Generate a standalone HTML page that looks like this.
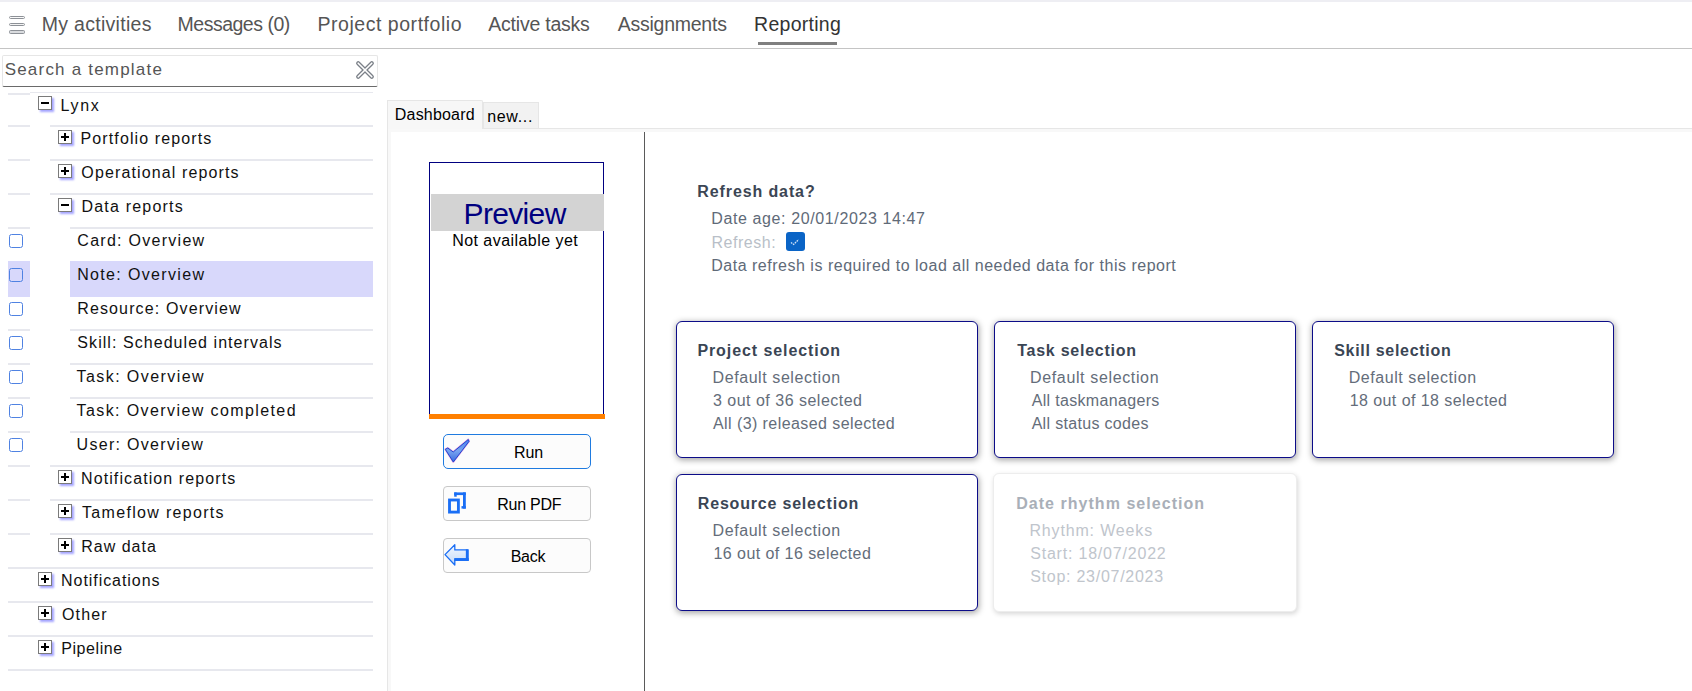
<!DOCTYPE html>
<html><head><meta charset="utf-8"><style>
html,body{margin:0;padding:0;background:#fff;}
body{width:1692px;height:691px;position:relative;overflow:hidden;font-family:"Liberation Sans",sans-serif;}
.t{position:absolute;white-space:pre;}
.r{position:absolute;}
</style></head><body>
<div class="r" style="left:0px;top:0px;width:1692px;height:2px;background:#eeeef3"></div>
<div class="r" style="left:9px;top:15.9px;width:16px;height:3.1px;border:1.3px solid #8d9197;border-radius:1.5px;background:#fafafa;box-sizing:border-box"></div>
<div class="r" style="left:9px;top:23px;width:16px;height:3.2px;border:1.3px solid #8d9197;border-radius:1.5px;background:#f2f2f2;box-sizing:border-box"></div>
<div class="r" style="left:9px;top:30.2px;width:16px;height:3.5px;border:1.3px solid #8d9197;border-radius:1.5px;background:#d9dbde;box-sizing:border-box"></div>
<div class="t" style="left:41.72px;top:12.94px;font-size:19.5px;line-height:23px;color:#555;font-weight:400;letter-spacing:0.294px;">My activities</div>
<div class="t" style="left:177.56px;top:12.94px;font-size:19.5px;line-height:23px;color:#555;font-weight:400;letter-spacing:-0.493px;">Messages (0)</div>
<div class="t" style="left:317.52px;top:12.94px;font-size:19.5px;line-height:23px;color:#555;font-weight:400;letter-spacing:0.530px;">Project portfolio</div>
<div class="t" style="left:488.32px;top:12.94px;font-size:19.5px;line-height:23px;color:#555;font-weight:400;letter-spacing:-0.234px;">Active tasks</div>
<div class="t" style="left:617.68px;top:12.94px;font-size:19.5px;line-height:23px;color:#555;font-weight:400;letter-spacing:-0.240px;">Assignments</div>
<div class="t" style="left:754.04px;top:12.94px;font-size:19.5px;line-height:23px;color:#333;font-weight:400;letter-spacing:0.280px;">Reporting</div>
<div class="r" style="left:758px;top:42px;width:79px;height:3px;background:#7f7f7f"></div>
<div class="r" style="left:0px;top:48px;width:1692px;height:1px;background:#c4c4c4"></div>
<div class="r" style="left:2px;top:55px;width:376px;height:32px;border:1px solid #e6e6e6;border-bottom:1.5px solid #6a6a6a;border-radius:2px;box-sizing:border-box;background:#fff"></div>
<div class="t" style="left:4.68px;top:60.11px;font-size:17px;line-height:20px;color:#555;font-weight:400;letter-spacing:1.200px;">Search a template</div>
<svg class="r" style="left:355px;top:60px" width="20" height="20" viewBox="0 0 20 20"><path d="M3.2 3.2 L16.8 16.8 M16.8 3.2 L3.2 16.8" fill="none" stroke="#7b8088" stroke-width="4.2" stroke-linecap="round"/><path d="M3.2 3.2 L16.8 16.8 M16.8 3.2 L3.2 16.8" fill="none" stroke="#fff" stroke-width="1.6" stroke-linecap="round"/></svg>
<div class="r" style="left:8px;top:93px;width:22px;height:2px;background:#e7e8ee"></div>
<div class="r" style="left:30px;top:92px;width:343px;height:1px;background:#e7e8ee"></div>
<div class="r" style="left:38px;top:96px;width:14px;height:14px;background:#fff;border:1.5px solid #7a7a7a;box-sizing:border-box;box-shadow:2px 2px 2px #a4a4ff"></div>
<div class="r" style="left:41px;top:102px;width:8px;height:2px;background:#000"></div>
<div class="t" style="left:60.56px;top:96.06px;font-size:16px;line-height:19px;color:#111;font-weight:400;letter-spacing:1.692px;">Lynx</div>
<div class="r" style="left:8px;top:125px;width:22px;height:2px;background:#e7e8ee"></div>
<div class="r" style="left:50px;top:125px;width:323px;height:2px;background:#e7e8ee"></div>
<div class="r" style="left:58px;top:130px;width:14px;height:14px;background:#fff;border:1.5px solid #7a7a7a;box-sizing:border-box;box-shadow:2px 2px 2px #a4a4ff"></div>
<div class="r" style="left:61px;top:136px;width:8px;height:2px;background:#000"></div>
<div class="r" style="left:64px;top:133px;width:2px;height:8px;background:#000"></div>
<div class="t" style="left:80.56px;top:129.06px;font-size:16px;line-height:19px;color:#111;font-weight:400;letter-spacing:1.110px;">Portfolio reports</div>
<div class="r" style="left:8px;top:159px;width:22px;height:2px;background:#e7e8ee"></div>
<div class="r" style="left:50px;top:159px;width:323px;height:2px;background:#e7e8ee"></div>
<div class="r" style="left:58px;top:164px;width:14px;height:14px;background:#fff;border:1.5px solid #7a7a7a;box-sizing:border-box;box-shadow:2px 2px 2px #a4a4ff"></div>
<div class="r" style="left:61px;top:170px;width:8px;height:2px;background:#000"></div>
<div class="r" style="left:64px;top:167px;width:2px;height:8px;background:#000"></div>
<div class="t" style="left:81.36px;top:163.06px;font-size:16px;line-height:19px;color:#111;font-weight:400;letter-spacing:1.125px;">Operational reports</div>
<div class="r" style="left:8px;top:193px;width:22px;height:2px;background:#e7e8ee"></div>
<div class="r" style="left:50px;top:193px;width:323px;height:2px;background:#e7e8ee"></div>
<div class="r" style="left:58px;top:198px;width:14px;height:14px;background:#fff;border:1.5px solid #7a7a7a;box-sizing:border-box;box-shadow:2px 2px 2px #a4a4ff"></div>
<div class="r" style="left:61px;top:204px;width:8px;height:2px;background:#000"></div>
<div class="t" style="left:81.52px;top:197.06px;font-size:16px;line-height:19px;color:#111;font-weight:400;letter-spacing:1.192px;">Data reports</div>
<div class="r" style="left:8px;top:227px;width:22px;height:2px;background:#e7e8ee"></div>
<div class="r" style="left:70px;top:227px;width:303px;height:2px;background:#e7e8ee"></div>
<div class="r" style="left:9px;top:234px;width:14px;height:14px;border:1.6px solid #4f82e2;border-radius:2.5px;box-sizing:border-box"></div>
<div class="t" style="left:77.36px;top:231.06px;font-size:16px;line-height:19px;color:#111;font-weight:400;letter-spacing:1.271px;">Card: Overview</div>
<div class="r" style="left:8px;top:261px;width:22px;height:2px;background:#e7e8ee"></div>
<div class="r" style="left:70px;top:261px;width:303px;height:2px;background:#e7e8ee"></div>
<div class="r" style="left:8px;top:261px;width:22px;height:36px;background:#d8d8fb"></div>
<div class="r" style="left:70px;top:261px;width:303px;height:36px;background:#d8d8fb"></div>
<div class="r" style="left:9px;top:268px;width:14px;height:14px;border:1.6px solid #4f82e2;border-radius:2.5px;box-sizing:border-box"></div>
<div class="t" style="left:77.20px;top:265.06px;font-size:16px;line-height:19px;color:#111;font-weight:400;letter-spacing:1.346px;">Note: Overview</div>
<div class="r" style="left:9px;top:302px;width:14px;height:14px;border:1.6px solid #4f82e2;border-radius:2.5px;box-sizing:border-box"></div>
<div class="t" style="left:77.20px;top:299.06px;font-size:16px;line-height:19px;color:#111;font-weight:400;letter-spacing:1.140px;">Resource: Overview</div>
<div class="r" style="left:8px;top:329px;width:22px;height:2px;background:#e7e8ee"></div>
<div class="r" style="left:70px;top:329px;width:303px;height:2px;background:#e7e8ee"></div>
<div class="r" style="left:9px;top:336px;width:14px;height:14px;border:1.6px solid #4f82e2;border-radius:2.5px;box-sizing:border-box"></div>
<div class="t" style="left:77.36px;top:333.06px;font-size:16px;line-height:19px;color:#111;font-weight:400;letter-spacing:1.052px;">Skill: Scheduled intervals</div>
<div class="r" style="left:8px;top:363px;width:22px;height:2px;background:#e7e8ee"></div>
<div class="r" style="left:70px;top:363px;width:303px;height:2px;background:#e7e8ee"></div>
<div class="r" style="left:9px;top:370px;width:14px;height:14px;border:1.6px solid #4f82e2;border-radius:2.5px;box-sizing:border-box"></div>
<div class="t" style="left:76.56px;top:367.06px;font-size:16px;line-height:19px;color:#111;font-weight:400;letter-spacing:1.422px;">Task: Overview</div>
<div class="r" style="left:8px;top:397px;width:22px;height:2px;background:#e7e8ee"></div>
<div class="r" style="left:70px;top:397px;width:303px;height:2px;background:#e7e8ee"></div>
<div class="r" style="left:9px;top:404px;width:14px;height:14px;border:1.6px solid #4f82e2;border-radius:2.5px;box-sizing:border-box"></div>
<div class="t" style="left:76.56px;top:401.06px;font-size:16px;line-height:19px;color:#111;font-weight:400;letter-spacing:1.403px;">Task: Overview completed</div>
<div class="r" style="left:8px;top:431px;width:22px;height:2px;background:#e7e8ee"></div>
<div class="r" style="left:70px;top:431px;width:303px;height:2px;background:#e7e8ee"></div>
<div class="r" style="left:9px;top:438px;width:14px;height:14px;border:1.6px solid #4f82e2;border-radius:2.5px;box-sizing:border-box"></div>
<div class="t" style="left:76.56px;top:435.06px;font-size:16px;line-height:19px;color:#111;font-weight:400;letter-spacing:1.307px;">User: Overview</div>
<div class="r" style="left:8px;top:465px;width:22px;height:2px;background:#e7e8ee"></div>
<div class="r" style="left:50px;top:465px;width:323px;height:2px;background:#e7e8ee"></div>
<div class="r" style="left:58px;top:470px;width:14px;height:14px;background:#fff;border:1.5px solid #7a7a7a;box-sizing:border-box;box-shadow:2px 2px 2px #a4a4ff"></div>
<div class="r" style="left:61px;top:476px;width:8px;height:2px;background:#000"></div>
<div class="r" style="left:64px;top:473px;width:2px;height:8px;background:#000"></div>
<div class="t" style="left:81.04px;top:469.06px;font-size:16px;line-height:19px;color:#111;font-weight:400;letter-spacing:1.094px;">Notification reports</div>
<div class="r" style="left:8px;top:499px;width:22px;height:2px;background:#e7e8ee"></div>
<div class="r" style="left:50px;top:499px;width:323px;height:2px;background:#e7e8ee"></div>
<div class="r" style="left:58px;top:504px;width:14px;height:14px;background:#fff;border:1.5px solid #7a7a7a;box-sizing:border-box;box-shadow:2px 2px 2px #a4a4ff"></div>
<div class="r" style="left:61px;top:510px;width:8px;height:2px;background:#000"></div>
<div class="r" style="left:64px;top:507px;width:2px;height:8px;background:#000"></div>
<div class="t" style="left:82.00px;top:503.06px;font-size:16px;line-height:19px;color:#111;font-weight:400;letter-spacing:1.320px;">Tameflow reports</div>
<div class="r" style="left:8px;top:533px;width:22px;height:2px;background:#e7e8ee"></div>
<div class="r" style="left:50px;top:533px;width:323px;height:2px;background:#e7e8ee"></div>
<div class="r" style="left:58px;top:538px;width:14px;height:14px;background:#fff;border:1.5px solid #7a7a7a;box-sizing:border-box;box-shadow:2px 2px 2px #a4a4ff"></div>
<div class="r" style="left:61px;top:544px;width:8px;height:2px;background:#000"></div>
<div class="r" style="left:64px;top:541px;width:2px;height:8px;background:#000"></div>
<div class="t" style="left:81.20px;top:537.06px;font-size:16px;line-height:19px;color:#111;font-weight:400;letter-spacing:1.000px;">Raw data</div>
<div class="r" style="left:8px;top:567px;width:22px;height:2px;background:#e7e8ee"></div>
<div class="r" style="left:30px;top:567px;width:343px;height:2px;background:#e7e8ee"></div>
<div class="r" style="left:38px;top:572px;width:14px;height:14px;background:#fff;border:1.5px solid #7a7a7a;box-sizing:border-box;box-shadow:2px 2px 2px #a4a4ff"></div>
<div class="r" style="left:41px;top:578px;width:8px;height:2px;background:#000"></div>
<div class="r" style="left:44px;top:575px;width:2px;height:8px;background:#000"></div>
<div class="t" style="left:61.04px;top:571.06px;font-size:16px;line-height:19px;color:#111;font-weight:400;letter-spacing:0.947px;">Notifications</div>
<div class="r" style="left:8px;top:601px;width:22px;height:2px;background:#e7e8ee"></div>
<div class="r" style="left:30px;top:601px;width:343px;height:2px;background:#e7e8ee"></div>
<div class="r" style="left:38px;top:606px;width:14px;height:14px;background:#fff;border:1.5px solid #7a7a7a;box-sizing:border-box;box-shadow:2px 2px 2px #a4a4ff"></div>
<div class="r" style="left:41px;top:612px;width:8px;height:2px;background:#000"></div>
<div class="r" style="left:44px;top:609px;width:2px;height:8px;background:#000"></div>
<div class="t" style="left:62.00px;top:605.06px;font-size:16px;line-height:19px;color:#111;font-weight:400;letter-spacing:1.120px;">Other</div>
<div class="r" style="left:8px;top:635px;width:22px;height:2px;background:#e7e8ee"></div>
<div class="r" style="left:30px;top:635px;width:343px;height:2px;background:#e7e8ee"></div>
<div class="r" style="left:38px;top:640px;width:14px;height:14px;background:#fff;border:1.5px solid #7a7a7a;box-sizing:border-box;box-shadow:2px 2px 2px #a4a4ff"></div>
<div class="r" style="left:41px;top:646px;width:8px;height:2px;background:#000"></div>
<div class="r" style="left:44px;top:643px;width:2px;height:8px;background:#000"></div>
<div class="t" style="left:61.20px;top:639.06px;font-size:16px;line-height:19px;color:#111;font-weight:400;letter-spacing:0.587px;">Pipeline</div>
<div class="r" style="left:8px;top:669px;width:365px;height:2px;background:#e7e8ee"></div>
<div class="r" style="left:387px;top:100px;width:1px;height:591px;background:#e6e6e6"></div>
<div class="r" style="left:388px;top:100px;width:95px;height:32px;background:#f7f7f7;border:1px solid #e6e6e6;border-bottom:none;border-left:none;border-top-right-radius:2px;box-sizing:border-box"></div>
<div class="t" style="left:394.84px;top:104.96px;font-size:16px;line-height:19px;color:#000;font-weight:400;letter-spacing:0.180px;">Dashboard</div>
<div class="r" style="left:483px;top:102px;width:56px;height:27px;background:#f2f2f2;border:1px solid #e6e6e6;box-sizing:border-box"></div>
<div class="t" style="left:487.16px;top:106.66px;font-size:16px;line-height:19px;color:#000;font-weight:400;letter-spacing:0.688px;">new...</div>
<div class="r" style="left:483px;top:128px;width:1209px;height:1px;background:#e6e6e6"></div>
<div class="r" style="left:388px;top:129px;width:1304px;height:3px;background:#f8f8f8"></div>
<div class="r" style="left:388px;top:132px;width:3px;height:559px;background:#f8f8f8"></div>
<div class="r" style="left:644px;top:132px;width:1px;height:559px;background:#5a5a5a"></div>
<div class="r" style="left:429px;top:162px;width:175px;height:254px;border:1px solid #000080;box-sizing:border-box;background:#fff"></div>
<div class="r" style="left:431px;top:194px;width:173px;height:37px;background:#d3d3d3"></div>
<div class="t" style="left:463.60px;top:196.10px;font-size:30px;line-height:36px;color:#000080;font-weight:400;letter-spacing:-0.667px;">Preview</div>
<div class="t" style="left:452.20px;top:230.96px;font-size:16px;line-height:19px;color:#000;font-weight:400;letter-spacing:0.450px;">Not available yet</div>
<div class="r" style="left:429px;top:414px;width:176px;height:5px;background:#ff8000"></div>
<div class="r" style="left:443px;top:434px;width:148px;height:35px;border:1.5px solid #1f7be0;border-radius:5px;box-sizing:border-box;background:#fcfcfc"></div>
<svg class="r" style="left:444px;top:438px" width="26" height="26" viewBox="0 0 26 26"><defs><linearGradient id="ck" x1="0" y1="0" x2="0" y2="1"><stop offset="0" stop-color="#4a80f0"/><stop offset="0.5" stop-color="#78a4f0"/><stop offset="1" stop-color="#3a6ae0"/></linearGradient></defs><path d="M1.3 11.3 L3.8 10 L9.2 14 L24.3 1.5 L25 3.4 L9.3 24 Z" fill="none" stroke="#e0a0e0" stroke-width="1.8" stroke-linejoin="round"/><path d="M1.3 11.3 L3.8 10 L9.2 14 L24.3 1.5 L25 3.4 L9.3 24 Z" fill="url(#ck)" stroke="#2448d0" stroke-width="1" stroke-linejoin="round"/></svg>
<div class="t" style="left:514.04px;top:442.96px;font-size:16px;line-height:19px;color:#000;font-weight:400;letter-spacing:-0.140px;">Run</div>
<div class="r" style="left:443px;top:486px;width:148px;height:35px;border:1px solid #c8c8c8;border-radius:4px;box-sizing:border-box;background:#fcfcfc"></div>
<svg class="r" style="left:444px;top:489px" width="26" height="26" viewBox="0 0 26 26"><g fill="#1a6ef5"><rect x="10.2" y="3.4" width="11.6" height="2.7"/><rect x="10.2" y="3.4" width="2.5" height="4.3"/><rect x="19" y="3.4" width="2.8" height="16.2"/><rect x="17.5" y="17.1" width="4.3" height="2.5"/></g><rect x="5.5" y="11" width="8.9" height="12.1" fill="none" stroke="#1a6ef5" stroke-width="2.85"/></svg>
<div class="t" style="left:497.34px;top:495.16px;font-size:16px;line-height:19px;color:#000;font-weight:400;letter-spacing:-0.275px;">Run PDF</div>
<div class="r" style="left:443px;top:538px;width:148px;height:35px;border:1px solid #c8c8c8;border-radius:4px;box-sizing:border-box;background:#fcfcfc"></div>
<svg class="r" style="left:442px;top:541px" width="30" height="28" viewBox="0 0 30 28"><defs><linearGradient id="ar" x1="0" y1="0" x2="0" y2="1"><stop offset="0" stop-color="#f4f8ff"/><stop offset="1" stop-color="#c4daf8"/></linearGradient></defs><path d="M3 13.6 L12.8 3.8 V8.9 H25.5 V19 H12.8 V24 Z" fill="url(#ar)" stroke="#1a6ef5" stroke-width="1.3" stroke-linejoin="round"/><path d="M25.3 8.3 V19.9" stroke="#1a6ef5" stroke-width="2.9"/><path d="M12.2 18.5 H26.7" stroke="#1a6ef5" stroke-width="2.9"/></svg>
<div class="t" style="left:510.72px;top:547.16px;font-size:16px;line-height:19px;color:#000;font-weight:400;letter-spacing:-0.300px;">Back</div>
<div class="t" style="left:697.36px;top:181.76px;font-size:16px;line-height:19px;color:#3c4654;font-weight:700;letter-spacing:0.884px;">Refresh data?</div>
<div class="t" style="left:711.22px;top:208.56px;font-size:16px;line-height:19px;color:#606a78;font-weight:400;letter-spacing:0.616px;">Date age: 20/01/2023 14:47</div>
<div class="t" style="left:711.54px;top:233.46px;font-size:16px;line-height:19px;color:#b9bfc8;font-weight:400;letter-spacing:0.525px;">Refresh:</div>
<div class="r" style="left:785.5px;top:231.5px;width:19.5px;height:19.5px;background:#0a64c6;border-radius:3px"></div>
<svg class="r" style="left:785px;top:231px" width="20" height="20" viewBox="0 0 20 20"><path d="M6 11.5 L8.6 13.4 L13.6 8.6" fill="none" stroke="#cfe0f6" stroke-width="1.3" stroke-dasharray="1.6 0.9"/></svg>
<div class="t" style="left:711.22px;top:256.46px;font-size:16px;line-height:19px;color:#606a78;font-weight:400;letter-spacing:0.513px;">Data refresh is required to load all needed data for this report</div>
<div class="r" style="left:676px;top:321px;width:302px;height:137px;border:1.5px solid #0c0c88;border-radius:6px;box-sizing:border-box;background:#fff;box-shadow:0.5px 1.5px 6px rgba(0,0,0,0.36)"></div>
<div class="t" style="left:697.38px;top:341.26px;font-size:16px;line-height:19px;color:#3a4554;font-weight:700;letter-spacing:0.920px;">Project selection</div>
<div class="t" style="left:712.52px;top:367.96px;font-size:16px;line-height:19px;color:#646d7a;font-weight:400;letter-spacing:0.580px;">Default selection</div>
<div class="t" style="left:713.00px;top:390.96px;font-size:16px;line-height:19px;color:#646d7a;font-weight:400;letter-spacing:0.492px;">3 out of 36 selected</div>
<div class="t" style="left:713.00px;top:413.96px;font-size:16px;line-height:19px;color:#646d7a;font-weight:400;letter-spacing:0.422px;">All (3) released selected</div>
<div class="r" style="left:994px;top:321px;width:302px;height:137px;border:1.5px solid #0c0c88;border-radius:6px;box-sizing:border-box;background:#fff;box-shadow:0.5px 1.5px 6px rgba(0,0,0,0.36)"></div>
<div class="t" style="left:1017.14px;top:341.26px;font-size:16px;line-height:19px;color:#3a4554;font-weight:700;letter-spacing:0.764px;">Task selection</div>
<div class="t" style="left:1030.04px;top:367.96px;font-size:16px;line-height:19px;color:#646d7a;font-weight:400;letter-spacing:0.640px;">Default selection</div>
<div class="t" style="left:1031.64px;top:390.96px;font-size:16px;line-height:19px;color:#646d7a;font-weight:400;letter-spacing:0.331px;">All taskmanagers</div>
<div class="t" style="left:1031.64px;top:413.96px;font-size:16px;line-height:19px;color:#646d7a;font-weight:400;letter-spacing:0.323px;">All status codes</div>
<div class="r" style="left:1312px;top:321px;width:302px;height:137px;border:1.5px solid #0c0c88;border-radius:6px;box-sizing:border-box;background:#fff;box-shadow:0.5px 1.5px 6px rgba(0,0,0,0.36)"></div>
<div class="t" style="left:1334.18px;top:341.26px;font-size:16px;line-height:19px;color:#3a4554;font-weight:700;letter-spacing:0.706px;">Skill selection</div>
<div class="t" style="left:1348.68px;top:367.96px;font-size:16px;line-height:19px;color:#646d7a;font-weight:400;letter-spacing:0.570px;">Default selection</div>
<div class="t" style="left:1349.64px;top:390.96px;font-size:16px;line-height:19px;color:#646d7a;font-weight:400;letter-spacing:0.442px;">18 out of 18 selected</div>
<div class="r" style="left:676px;top:474px;width:302px;height:137px;border:1.5px solid #0c0c88;border-radius:6px;box-sizing:border-box;background:#fff;box-shadow:0.5px 1.5px 6px rgba(0,0,0,0.36)"></div>
<div class="t" style="left:697.86px;top:494.26px;font-size:16px;line-height:19px;color:#3a4554;font-weight:700;letter-spacing:0.804px;">Resource selection</div>
<div class="t" style="left:712.52px;top:520.96px;font-size:16px;line-height:19px;color:#646d7a;font-weight:400;letter-spacing:0.580px;">Default selection</div>
<div class="t" style="left:713.48px;top:543.96px;font-size:16px;line-height:19px;color:#646d7a;font-weight:400;letter-spacing:0.442px;">16 out of 16 selected</div>
<div class="r" style="left:993px;top:473px;width:304px;height:139px;border:1px solid #ededed;border-radius:6px;box-sizing:border-box;background:#fff;box-shadow:1px 2px 5px rgba(0,0,0,0.16)"></div>
<div class="t" style="left:1016.18px;top:494.26px;font-size:16px;line-height:19px;color:#a9afb8;font-weight:700;letter-spacing:1.038px;">Date rhythm selection</div>
<div class="t" style="left:1029.40px;top:520.96px;font-size:16px;line-height:19px;color:#c0c5cc;font-weight:400;letter-spacing:0.850px;">Rhythm: Weeks</div>
<div class="t" style="left:1030.20px;top:543.96px;font-size:16px;line-height:19px;color:#c0c5cc;font-weight:400;letter-spacing:0.800px;">Start: 18/07/2022</div>
<div class="t" style="left:1030.20px;top:566.96px;font-size:16px;line-height:19px;color:#c0c5cc;font-weight:400;letter-spacing:0.738px;">Stop: 23/07/2023</div>
</body></html>
